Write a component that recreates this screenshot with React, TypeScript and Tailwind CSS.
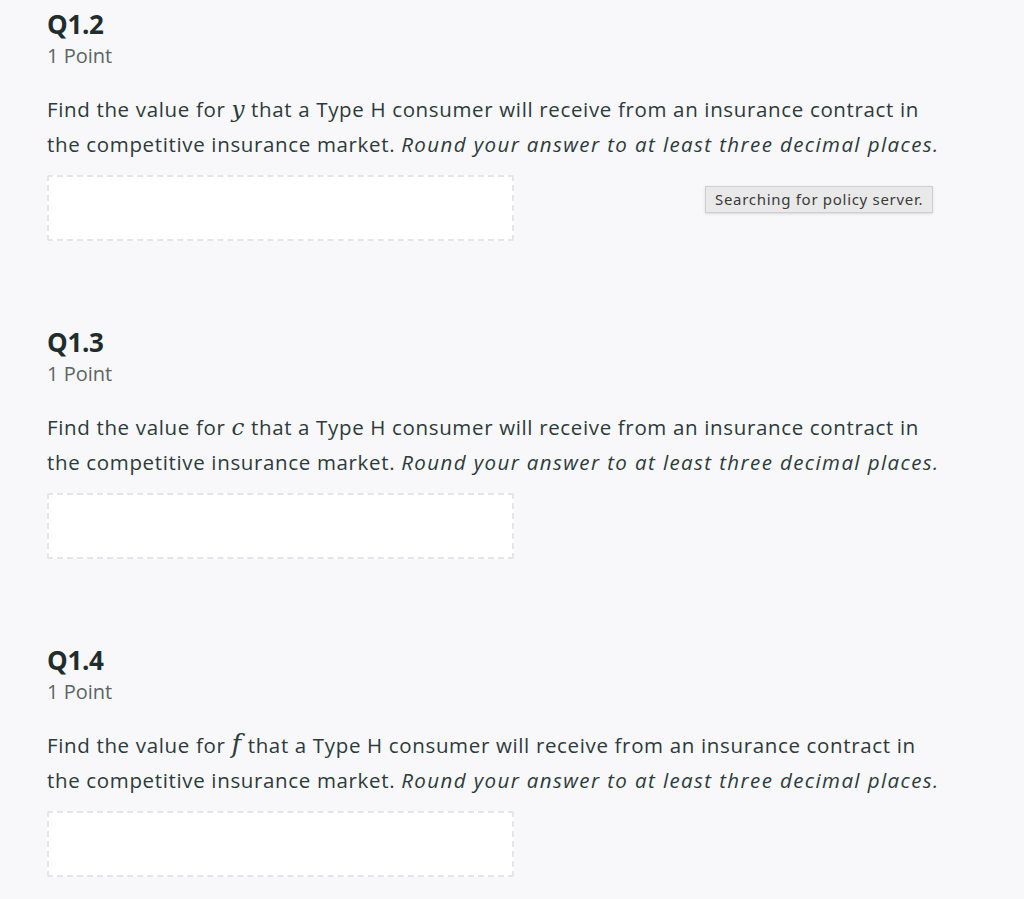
import React from 'react';

const font = { fontFamily: '"Open Sans", Lato, sans-serif' };

function Question({ num, variable, big }: { num: string; variable: string; big?: boolean }) {
  return (
    <section className="h-[318px]">
      <h3 className="text-[26px] leading-[32px] font-bold text-[#1f2d2d] pt-[8px] tracking-[-0.3px]">Q{num}</h3>
      <div className="text-[20px] leading-[28px] text-[#5b6566] mt-[2px]">1 Point</div>
      <p className="mt-[22px] text-[20.5px] leading-[35px] tracking-[0.65px] text-[#2d3a3a] whitespace-nowrap">
        <span>Find the value for</span>{' '}
        <span
          className={`inline-block italic leading-[20px] ${big ? 'text-[26px]' : 'text-[23px]'}`}
          style={{ fontFamily: '"DejaVu Serif", "Liberation Serif", serif' }}
        >
          {variable}
        </span>{' '}
        <span>that a Type H consumer will receive from an insurance contract in</span>
        <br />
        <span>the competitive insurance market.</span>{' '}
        <em className="tracking-[1.4px]">Round your answer to at least three decimal places.</em>
      </p>
      <div className="mt-[13px] w-[467px] h-[66px] bg-white border-2 border-dashed border-[#e3e5e8] rounded-[2px]" />
    </section>
  );
}

export default function App() {
  return (
    <div className="h-[899px] overflow-hidden bg-[#f8f8fa] relative" style={font}>
      <div className="pl-[47px]">
        <Question num="1.2" variable="y" />
        <Question num="1.3" variable="c" />
        <Question num="1.4" variable="f" big />
      </div>
      <div
        className="absolute left-[705px] top-[186px] px-[9px] h-[27px] flex items-center bg-[#e9e9ea] border border-[#cfcfd1] shadow-sm text-[15px] tracking-[0.7px] text-[#3a3a3a]"
        style={{ fontFamily: '"Noto Sans", "Liberation Sans", sans-serif' }}
      >
        Searching for policy server.
      </div>
    </div>
  );
}
